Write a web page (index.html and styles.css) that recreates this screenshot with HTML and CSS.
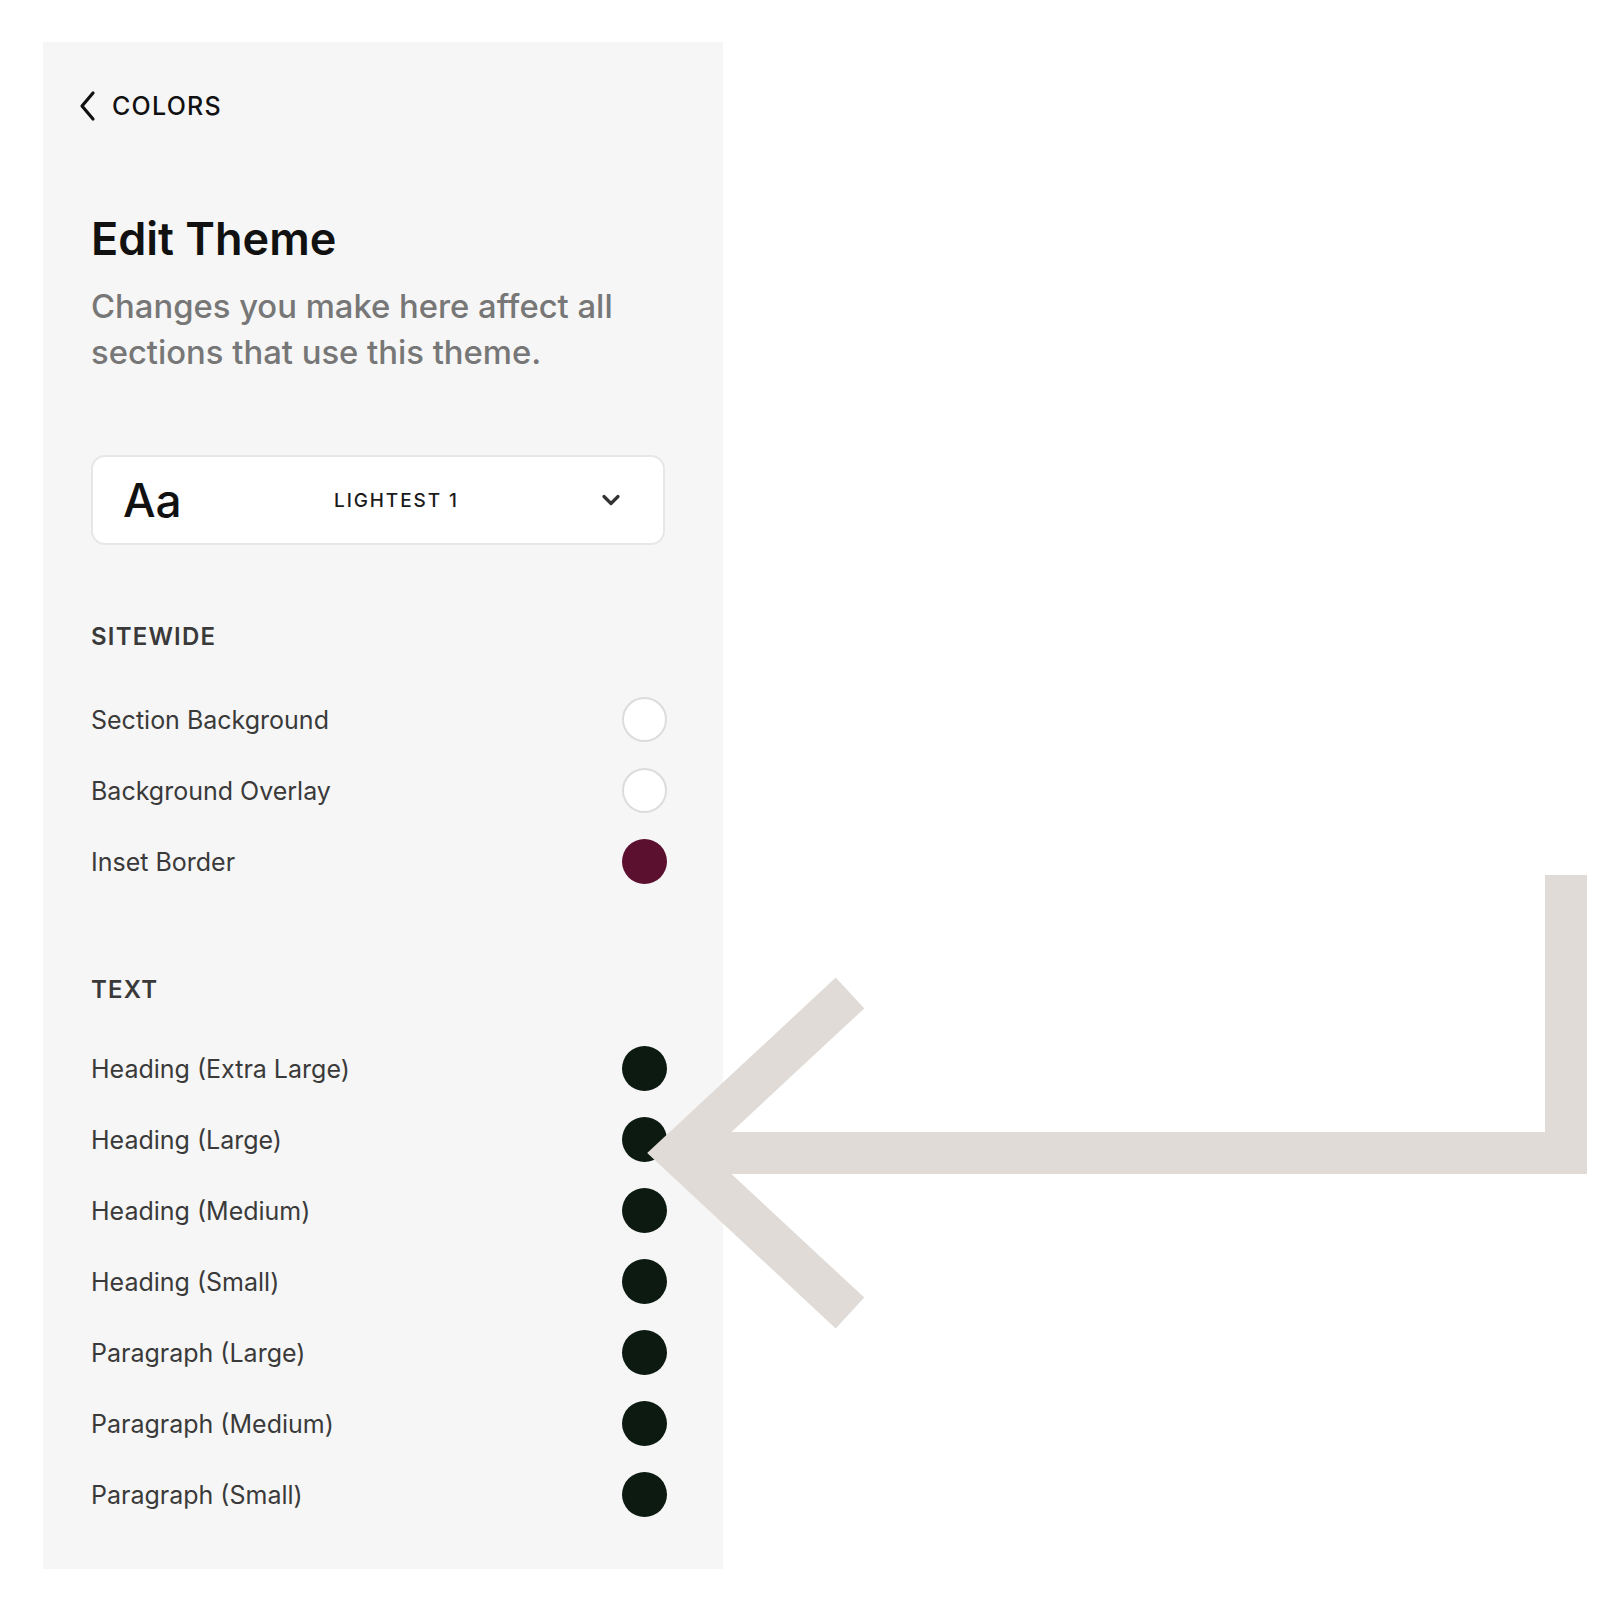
FILE: index.html
```html
<!DOCTYPE html>
<html lang="en">
<head>
    <meta charset="UTF-8">
    <meta name="viewport" content="width=device-width, initial-scale=1.0">
    <title>Edit Theme</title>
    <link rel="stylesheet" href="styles.css">
</head>
<body>
    <div class="page">
        <div class="panel">
            <div class="back">
                <svg class="back-icon" width="18" height="32" viewBox="0 0 18 32">
                    <polyline points="14,3 3,16 14,29" fill="none" stroke="#111" stroke-width="3.2" stroke-linecap="round" stroke-linejoin="round"/>
                </svg>
                <span>COLORS</span>
            </div>

            <h1 class="title">Edit Theme</h1>
            <p class="desc">Changes you make here affect all sections that use this theme.</p>

            <div class="theme-select">
                <span class="aa">Aa</span>
                <span class="theme-name">LIGHTEST 1</span>
                <svg class="caret" width="20" height="14" viewBox="0 0 20 14">
                    <polyline points="3,3.5 10,10.5 17,3.5" fill="none" stroke="#333" stroke-width="3.2" stroke-linecap="round" stroke-linejoin="round"/>
                </svg>
            </div>

            <h3 class="group-title">SITEWIDE</h3>
            <div class="rows">
                <div class="row"><span>Section Background</span><span class="swatch white"></span></div>
                <div class="row"><span>Background Overlay</span><span class="swatch white"></span></div>
                <div class="row"><span>Inset Border</span><span class="swatch wine"></span></div>
            </div>

            <h3 class="group-title text-group">TEXT</h3>
            <div class="rows text-rows">
                <div class="row"><span>Heading (Extra Large)</span><span class="swatch dark"></span></div>
                <div class="row"><span>Heading (Large)</span><span class="swatch dark"></span></div>
                <div class="row"><span>Heading (Medium)</span><span class="swatch dark"></span></div>
                <div class="row"><span>Heading (Small)</span><span class="swatch dark"></span></div>
                <div class="row"><span>Paragraph (Large)</span><span class="swatch dark"></span></div>
                <div class="row"><span>Paragraph (Medium)</span><span class="swatch dark"></span></div>
                <div class="row"><span>Paragraph (Small)</span><span class="swatch dark"></span></div>
            </div>
        </div>

        <!-- annotation arrow drawn over the panel -->
        <svg class="arrow" width="1620" height="1620" viewBox="0 0 1620 1620">
            <path d="M678 1153 H1566 V875" fill="none" stroke="#e0dbd6" stroke-width="42" stroke-linejoin="miter"/>
            <path d="M850 993 L678 1153 L850 1313" fill="none" stroke="#e0dbd6" stroke-width="42" stroke-linejoin="miter" stroke-miterlimit="10"/>
        </svg>
    </div>
</body>
</html>
```

FILE: styles.css
```css
body {
    margin: 0;
    background: #fff;
    font-family: "Inter", "Liberation Sans", sans-serif;
}
.page {
    position: relative;
    width: 1620px;
    height: 1620px;
    padding: 42px 0 0 43px;
    box-sizing: border-box;
}
.panel {
    width: 680px;
    height: 1527px;
    box-sizing: border-box;
    background: #f6f6f6;
    padding: 48px 58px 0 48px;
}
.back {
    display: flex;
    align-items: center;
    gap: 15px;
    height: 32px;
    margin-left: -12px;
    font-size: 25px;
    font-weight: 500;
    letter-spacing: 0.05em;
    color: #111;
}
.back-icon {
    display: block;
}
.title {
    margin: 91px 0 0;
    font-size: 45px;
    line-height: 52px;
    font-weight: 600;
    color: #111;
}
.desc {
    margin: 18px 0 0;
    font-size: 32.8px;
    line-height: 46px;
    font-weight: 500;
    color: #777;
    width: 560px;
}
.theme-select {
    margin-top: 80px;
    height: 90px;
    box-sizing: border-box;
    background: #fff;
    border: 2px solid #e7e7e7;
    border-radius: 14px;
    display: flex;
    align-items: center;
    padding: 0 42px 0 30px;
}
.aa {
    font-size: 46px;
    font-weight: 500;
    color: #111;
    width: 58px;
}
.theme-name {
    margin-left: 153px;
    font-size: 19px;
    font-weight: 500;
    letter-spacing: 0.1em;
    color: #1a1a1a;
}
.caret {
    margin-left: auto;
    display: block;
}
.group-title {
    margin: 76px 0 0;
    font-size: 24px;
    line-height: 32px;
    font-weight: 600;
    letter-spacing: 0.05em;
    color: #3a3a3a;
}
.text-group {
    margin-top: 77px;
}
.rows {
    margin-top: 31px;
}
.text-rows {
    margin-top: 27px;
}
.row {
    display: flex;
    align-items: center;
    justify-content: space-between;
    height: 71px;
    font-size: 25px;
    color: #3a3a3a;
}
.swatch {
    width: 45px;
    height: 45px;
    border-radius: 50%;
    box-sizing: border-box;
    margin-right: -2px;
}
.white {
    background: #fff;
    border: 2px solid #dcdcdc;
}
.wine {
    background: #5b1030;
}
.dark {
    background: #0c1a12;
}
.arrow {
    position: absolute;
    top: 0;
    left: 0;
    pointer-events: none;
}
```
